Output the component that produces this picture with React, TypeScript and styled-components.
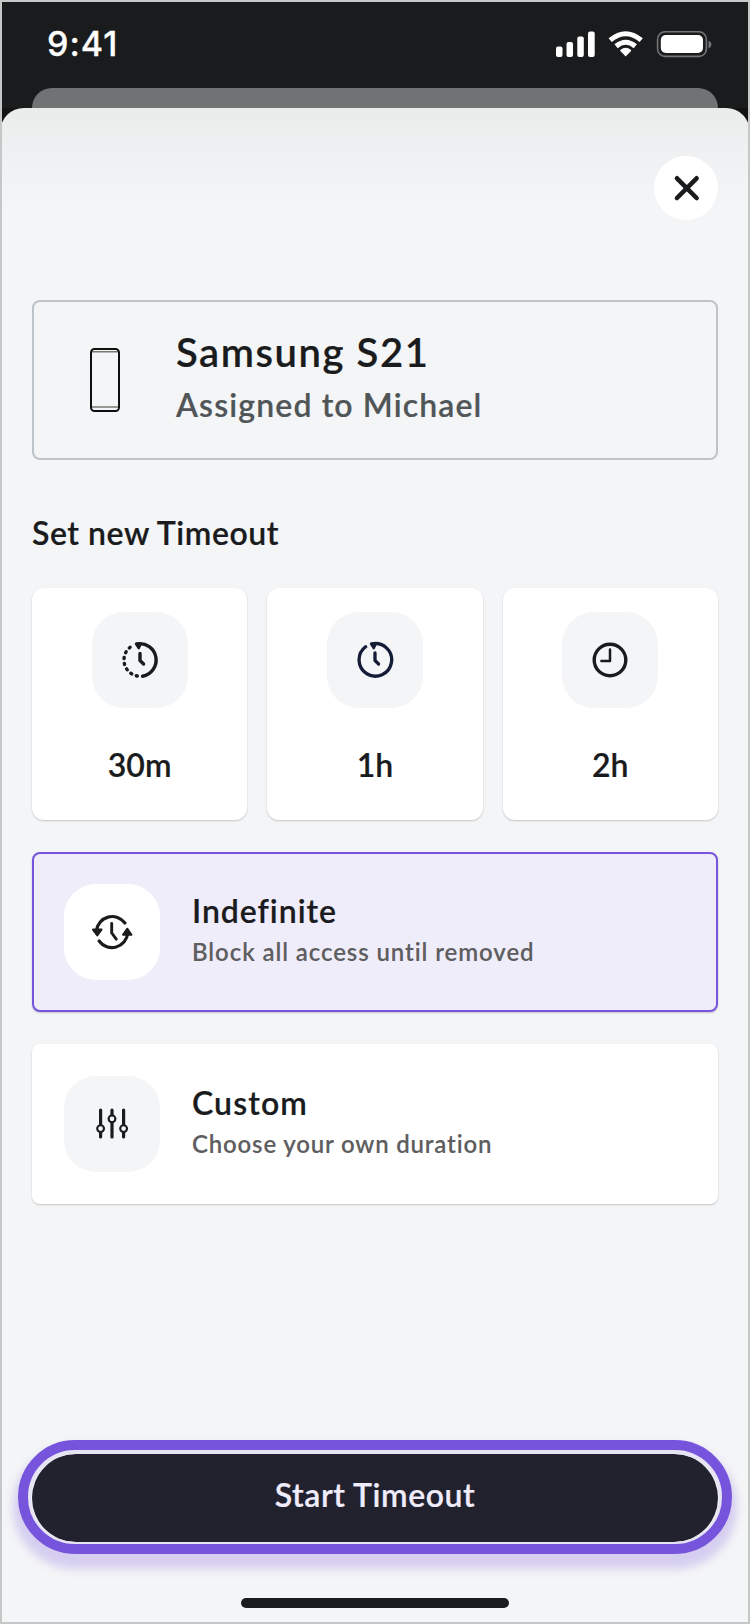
import React from 'react';
import styled, { createGlobalStyle } from 'styled-components';

const GlobalStyle = createGlobalStyle`
  * { box-sizing: border-box; }
  body { margin: 0; }
  svg { display: block; flex: none; }
  button { padding: 0; border: 0; font: inherit; color: inherit; cursor: pointer; }
`;

const Frame = styled.div`
  width: 750px;
  height: 1624px;
  border: 2px solid #c6c7c7;
  background: #131314;
  display: flex;
  flex-direction: column;
  overflow: hidden;
  font-family: Lato, 'Open Sans', sans-serif;
  font-weight: 600;
  color: #1a1b1d;
`;

const TopArea = styled.header`
  height: 106px;
  flex: none;
  padding: 0 30px;
  background: #1a1b1d;
  display: flex;
  flex-direction: column;
  justify-content: space-between;
`;

const StatusBar = styled.div`
  height: 84px;
  padding: 0 5px 0 15px;
  display: flex;
  justify-content: space-between;
  align-items: center;
`;

const Time = styled.span`
  font: 500 34px/40px Inter, sans-serif;
  letter-spacing: 1px;
  color: #fff;
  -webkit-text-stroke: 0.3px currentColor;
`;

const PreviousSheet = styled.div`
  height: 20px;
  border-radius: 20px 20px 0 0;
  background: #717274;
`;

const Sheet = styled.main`
  flex: 1;
  margin: 0 -2px;
  padding: 48px 32px 14px;
  border-radius: 24px 24px 0 0;
  background: linear-gradient(#eaebeb 0, #eff0f1 40px, #f4f5f7 100px);
  display: flex;
  flex-direction: column;
`;

const CloseButton = styled.button`
  width: 64px;
  height: 64px;
  flex: none;
  align-self: flex-end;
  border-radius: 50%;
  background: #fff;
  display: grid;
  place-items: center;
`;

const Text = styled.span<{ $size: number; $track?: number; $color?: string }>`
  display: block;
  white-space: nowrap;
  font-size: ${p => p.$size}px;
  line-height: 40px;
  letter-spacing: ${p => p.$track ?? 0}px;
  color: ${p => p.$color ?? '#1a1b1d'};
  -webkit-text-stroke: ${p => (p.$size > 24 ? 0.2 : 0.1)}px currentColor;
`;

const DeviceCard = styled.section`
  height: 160px;
  flex: none;
  margin-top: 80px;
  padding-left: 56px;
  border: 2px solid #bbc4c9;
  border-radius: 8px;
  display: flex;
  align-items: center;
  gap: 56px;
`;

const DeviceText = styled.div`
  display: flex;
  flex-direction: column;
  gap: 13px;
  padding-bottom: 4px;
`;

const Heading = styled.h2`
  margin: 53px 0 35px;
  font-weight: inherit;
`;

const Tiles = styled.div`
  display: grid;
  grid-template-columns: repeat(3, 1fr);
  gap: 20px;
`;

const Tile = styled.button`
  height: 232px;
  padding-top: 24px;
  border-radius: 12px;
  background: #fff;
  box-shadow: 0 1px 2px rgba(0, 0, 0, 0.2);
  display: flex;
  flex-direction: column;
  align-items: center;
  gap: 37px;
`;

const IconBox = styled.span<{ $white?: boolean }>`
  width: 96px;
  height: 96px;
  flex: none;
  border-radius: 32px;
  background: ${p => (p.$white ? '#fff' : '#f4f5f7')};
  display: grid;
  place-items: center;
`;

const Option = styled.button<{ $selected?: boolean }>`
  height: 160px;
  flex: none;
  margin-top: 32px;
  padding-left: 30px;
  border: 2px solid ${p => (p.$selected ? '#7655dc' : '#fff')};
  border-radius: 8px;
  background: ${p => (p.$selected ? '#f0edfb' : '#fff')};
  box-shadow: 0 1px 2px rgba(0, 0, 0, 0.2);
  display: flex;
  align-items: center;
  gap: 32px;
  text-align: left;
`;

const OptionText = styled.span`
  display: flex;
  flex-direction: column;
  gap: 1px;
  padding-bottom: 2px;
`;

const StartButton = styled.button`
  height: 88px;
  flex: none;
  margin-top: auto;
  padding-bottom: 6px;
  border-radius: 44px;
  background: #22212e;
  position: relative;
  display: grid;
  place-items: center;
`;

const FocusRing = styled.span`
  position: absolute;
  inset: -14px -14px -12px;
  border: 10px solid #7655dc;
  border-radius: 57px;
  box-shadow: 0 10px 8px 5px rgba(118, 85, 220, 0.24), inset 0 1px 0 3px #e6e4f4;
  pointer-events: none;
`;

const HomeIndicator = styled.div`
  width: 268px;
  height: 10px;
  flex: none;
  margin: 56px auto 0;
  border-radius: 5px;
  background: #1a1c1d;
`;

const INK = '#1a1b1d';

const StatusIcons = () => (
  <svg width="158" height="28" viewBox="555 30 158 28">
    <g fill="#fff">
      <rect x="556" y="46.5" width="6.5" height="10.5" rx="2" />
      <rect x="566.5" y="42" width="6.5" height="15" rx="2" />
      <rect x="577.3" y="36.5" width="6.5" height="20.5" rx="2" />
      <rect x="588" y="31.5" width="6.7" height="25.5" rx="2" />
      <path d="M625.7 56.4L620.4 50.9Q619.9 50.3 620.6 49.7Q625.7 45.8 630.8 49.7Q631.5 50.3 631 50.9Z" />
    </g>
    <g fill="none" stroke="#fff" strokeWidth="5">
      <path d="M610.2 40.2Q625.7 27.3 641.2 40.2" />
      <path d="M616.1 46.2Q625.7 38.3 635.3 46.2" />
    </g>
    <rect x="657.6" y="31.8" width="48.8" height="24.6" rx="7.5" fill="none" stroke="#747577" strokeWidth="1.6" />
    <rect x="660.8" y="35" width="42.2" height="18" rx="5" fill="#fff" />
    <path d="M708.5 40.5q3 1.5 3 4t-3 4z" fill="#747577" />
  </svg>
);

const CloseIcon = () => (
  <svg width="32" height="32" viewBox="0 0 32 32" stroke={INK} strokeWidth="4.6" strokeLinecap="round">
    <path d="M7 6.3L26.6 26M26.6 6.3L7 26" />
  </svg>
);

const PhoneIcon = () => (
  <svg width="30" height="64" viewBox="0 0 30 64" fill="none">
    <path d="M2 3.7H28M2 59H28" stroke="#777971" strokeWidth="1.6" />
    <rect x="1" y="1" width="28" height="62" rx="3.5" stroke="#0e0f10" strokeWidth="2" />
  </svg>
);

const Clock30 = () => (
  <svg width="40" height="40" viewBox="0 0 40 40" fill="none" stroke={INK} strokeWidth="3.4" strokeLinecap="round" strokeLinejoin="round">
    <path d="M17 3.9A16.3 16.3 0 0 1 22.5 36.2" />
    <path d="M17.3 36A16.3 16.3 0 0 1 12.2 5.8" strokeDasharray="1.1 4.9" />
    <path d="M16 3.8L20.7 3.9L18.7 8.2Z" fill={INK} strokeWidth="2.4" />
    <path d="M20 13.5V20.5L23.6 24" />
  </svg>
);

const Clock60 = () => (
  <svg width="40" height="40" viewBox="0 0 40 40" fill="none" stroke="#151c38" strokeWidth="3.3" strokeLinecap="round" strokeLinejoin="round">
    <path d="M17 3.9A16.3 16.3 0 1 1 10.6 6.8" />
    <path d="M16 3.8L20.7 3.9L18.7 8.2Z" fill="#151c38" strokeWidth="2.4" />
    <path d="M20 13V20.5L23.6 24" />
  </svg>
);

const Clock120 = () => (
  <svg width="40" height="40" viewBox="0 0 40 40" fill="none" stroke={INK} strokeLinecap="round" strokeLinejoin="round">
    <circle cx="20" cy="20" r="15.8" strokeWidth="3.4" />
    <path d="M20 9.6V21H11.4" strokeWidth="2.5" />
  </svg>
);

const ClockLoop = () => (
  <svg width="44" height="40" viewBox="0 0 44 40" fill="none" stroke={INK} strokeWidth="3.2" strokeLinecap="round" strokeLinejoin="round">
    <path d="M35 11A15.8 15.8 0 0 0 6.5 19" />
    <path d="M9.1 29A15.8 15.8 0 0 0 37.7 21" />
    <path d="M3 17.6H11.5L7.3 23.5ZM33 22.8H41.5L37.2 16.7Z" fill={INK} strokeWidth="2" />
    <path d="M21.7 11.5V21L26.3 27.2" strokeWidth="2.9" />
  </svg>
);

const Sliders = () => (
  <svg width="36" height="36" viewBox="0 0 36 36" fill="none" stroke={INK} strokeWidth="3.2" strokeLinecap="round">
    <path d="M6.6 4V18.5M6.6 27V31M18 4V8.5M18 17V31M29.6 4V18.5M29.6 27V31" />
    <g strokeWidth="2.1">
      <circle cx="6.6" cy="22.6" r="3.4" />
      <circle cx="18" cy="12.8" r="3.4" />
      <circle cx="29.6" cy="22.6" r="3.4" />
    </g>
  </svg>
);

const durations = [
  { label: '30m', icon: <Clock30 /> },
  { label: '1h', icon: <Clock60 /> },
  { label: '2h', icon: <Clock120 /> },
];

export default function App() {
  return (
    <Frame>
      <GlobalStyle />
      <TopArea>
        <StatusBar>
          <Time>9:41</Time>
          <StatusIcons />
        </StatusBar>
        <PreviousSheet />
      </TopArea>
      <Sheet>
        <CloseButton aria-label="Close"><CloseIcon /></CloseButton>
        <DeviceCard>
          <PhoneIcon />
          <DeviceText>
            <Text $size={40} $track={1.55}>Samsung S21</Text>
            <Text $size={32} $track={1.12} $color="#505657">Assigned to Michael</Text>
          </DeviceText>
        </DeviceCard>
        <Heading><Text $size={32} $track={0.55}>Set new Timeout</Text></Heading>
        <Tiles>
          {durations.map(d => (
            <Tile key={d.label}>
              <IconBox>{d.icon}</IconBox>
              <Text $size={32}>{d.label}</Text>
            </Tile>
          ))}
        </Tiles>
        <Option $selected>
          <IconBox $white><ClockLoop /></IconBox>
          <OptionText>
            <Text $size={32} $track={0.95}>Indefinite</Text>
            <Text $size={24} $track={0.91} $color="#5e5e60">Block all access until removed</Text>
          </OptionText>
        </Option>
        <Option>
          <IconBox><Sliders /></IconBox>
          <OptionText>
            <Text $size={32} $track={1.1}>Custom</Text>
            <Text $size={24} $track={0.82} $color="#5e5e60">Choose your own duration</Text>
          </OptionText>
        </Option>
        <StartButton>
          <FocusRing />
          <Text $size={32} $track={0.55} $color="#efecfb">Start Timeout</Text>
        </StartButton>
        <HomeIndicator />
      </Sheet>
    </Frame>
  );
}
